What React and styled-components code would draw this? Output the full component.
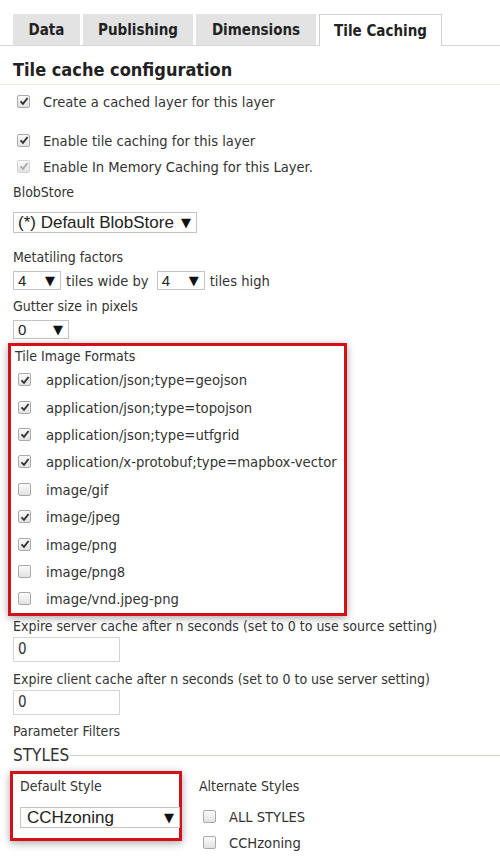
import React from "react"
import styled, { createGlobalStyle } from "styled-components"

const GlobalStyle = createGlobalStyle`
  body {
    margin: 0;
    background: #fff;
    font-family: "DejaVu Sans Condensed", "DejaVu Sans", sans-serif;
    color: #333;
    font-size: 14px;
  }
`;

const Page = styled.div`
  width: 500px;
  height: 860px;
  overflow: hidden;
  padding-left: 13px;
  box-sizing: border-box;
`;

const TabBar = styled.div`
  display: flex;
  gap: 3px;
  margin: 14px 0 0 -13px;
  padding-left: 13px;
  border-bottom: 1px solid #d6d6d6;
  height: 31px;
`;

const Tab = styled.div`
  width: ${p => p.w}px;
  box-sizing: border-box;
  display: flex;
  align-items: center;
  justify-content: center;
  font-weight: bold;
  font-size: 15px;
  color: #222;
  background: ${p => (p.active ? "#fff" : "#e3e3e3")};
  border: 1px solid ${p => (p.active ? "#cfcfcf" : "#e3e3e3")};
  border-bottom: none;
  height: ${p => (p.active ? "32px" : "31px")};
`;

const Heading = styled.h2`
  margin: 0 0 0 -13px;
  padding: 12px 0 2px 13px;
  font-size: 18px;
  line-height: 24px;
  font-weight: bold;
  color: #222;
  border-bottom: 1px solid #ebebdf;
`;

const Row = styled.div`
  display: flex;
  align-items: center;
  height: ${p => p.h || 20}px;
  margin-top: ${p => p.mt || 0}px;
  font-size: ${p => p.fs || 14}px;
`;

const Label = styled.div`
  height: 20px;
  line-height: 20px;
  margin-top: ${p => p.mt || 0}px;
  white-space: nowrap;
`;

const BoxWrap = styled.span`
  width: 13px;
  height: 13px;
  box-sizing: border-box;
  border: 1px solid ${p => (p.disabled ? "#d4d4d4" : "#a9a9a9")};
  border-radius: 2px;
  background: linear-gradient(#fbfbfb, #e2e2e2);
  display: inline-flex;
  align-items: center;
  justify-content: center;
  margin-left: ${p => p.ml}px;
  margin-right: ${p => p.mr}px;
  flex-shrink: 0;
`;

const Check = ({ checked, disabled, ml = 4, mr = 13 }) => (
  <BoxWrap disabled={disabled} ml={ml} mr={mr}>
    {checked && (
      <svg width="10" height="10" viewBox="0 0 10 10">
        <path
          d="M1.5 5.3 L4 7.8 L8.6 2"
          fill="none"
          stroke={disabled ? "#aaa" : "#333"}
          strokeWidth="1.9"
        />
      </svg>
    )}
  </BoxWrap>
);

const Select = styled.div`
  width: ${p => p.w}px;
  height: ${p => p.h || 19}px;
  margin-top: ${p => p.mt || 0}px;
  box-sizing: border-box;
  border: 1px solid #c4c4c4;
  background: #fff;
  display: flex;
  align-items: center;
  justify-content: space-between;
  padding: 0 5px 0 ${p => p.pl || 4}px;
  font-family: "Liberation Sans", Arial, sans-serif;
  font-size: ${p => p.fs || 15}px;
  color: #222;
  flex-shrink: 0;
`;

const Arrow = styled.span`
  font-family: "DejaVu Sans", sans-serif;
  font-size: 13px;
  color: #111;
`;

const RedBox = styled.div`
  border: 3px solid #d3111b;
  box-shadow: 0 2px 8px rgba(0, 0, 0, 0.35);
  box-sizing: border-box;
`;

const FormatsBox = styled(RedBox)`
  width: 339px;
  height: 273px;
  margin: 4px 0 0 -5px;
  padding-left: 4px;
`;

const FormatRow = styled.div`
  display: flex;
  align-items: center;
  height: 27.4px;
  font-size: 14.7px;
  white-space: nowrap;
`;

const TextInput = styled.div`
  width: 107px;
  height: 25px;
  margin-top: 1px;
  box-sizing: border-box;
  border: 1px solid #d4d4d4;
  padding-left: 4px;
  line-height: 23px;
  font-size: 15px;
`;

const Legend = styled.div`
  display: flex;
  align-items: center;
  height: 20px;
  margin-top: 4px;
  font-size: 17px;
  color: #333;
  &::after {
    content: "";
    flex: 1;
    border-top: 1px solid #d6d6bd;
    margin-left: 1px;
  }
`;

const StylesRow = styled.div`
  display: flex;
  margin-top: 6px;
`;

const DefaultBox = styled(RedBox)`
  width: 172px;
  height: 70px;
  margin-left: -3px;
  padding: 2px 0 0 7px;
`;

const AltColumn = styled.div`
  margin-left: 17px;
  padding-top: 5px;
`;

const AltList = styled.div`
  margin-top: 7px;
`;

const AltRow = styled.div`
  display: flex;
  align-items: center;
  height: 26px;
  font-size: 14.6px;
`;

const Inline = styled.span`
  margin: 0 ${p => p.mr || 0}px 0 ${p => p.ml || 0}px;
  font-size: 14.6px;
`;

const formats = [
  ["application/json;type=geojson", true],
  ["application/json;type=topojson", true],
  ["application/json;type=utfgrid", true],
  ["application/x-protobuf;type=mapbox-vector", true],
  ["image/gif", false],
  ["image/jpeg", true],
  ["image/png", true],
  ["image/png8", false],
  ["image/vnd.jpeg-png", false],
];

const App = () => (
  <Page>
    <GlobalStyle />
    <TabBar>
      <Tab w={67}>Data</Tab>
      <Tab w={110}>Publishing</Tab>
      <Tab w={120}>Dimensions</Tab>
      <Tab w={123} active>Tile Caching</Tab>
    </TabBar>
    <Heading>Tile cache configuration</Heading>

    <Row mt={6} fs={14.6}>
      <Check checked />
      Create a cached layer for this layer
    </Row>
    <Row mt={19} fs={14.6}>
      <Check checked />
      Enable tile caching for this layer
    </Row>
    <Row mt={6} fs={14.6}>
      <Check checked disabled />
      Enable In Memory Caching for this Layer.
    </Row>

    <Label mt={6}>BlobStore</Label>
    <Select w={184} h={21} mt={10} fs={17}>
      (*) Default BlobStore <Arrow>▼</Arrow>
    </Select>

    <Label mt={14}>Metatiling factors</Label>
    <Row mt={4} h={19}>
      <Select w={48}>4 <Arrow>▼</Arrow></Select>
      <Inline ml={5} mr={8}>tiles wide by</Inline>
      <Select w={48}>4 <Arrow>▼</Arrow></Select>
      <Inline ml={5}>tiles high</Inline>
    </Row>

    <Label mt={6}>Gutter size in pixels</Label>
    <Select w={56} mt={4}>0 <Arrow>▼</Arrow></Select>

    <FormatsBox>
      <Label>Tile Image Formats</Label>
      {formats.map(([name, on]) => (
        <FormatRow key={name}>
          <Check checked={on} ml={3} mr={15} />
          {name}
        </FormatRow>
      ))}
    </FormatsBox>

    <Label>Expire server cache after n seconds (set to 0 to use source setting)</Label>
    <TextInput>0</TextInput>
    <Label mt={7}>Expire client cache after n seconds (set to 0 to use server setting)</Label>
    <TextInput>0</TextInput>
    <Label mt={6}>Parameter Filters</Label>

    <Legend>STYLES</Legend>
    <StylesRow>
      <DefaultBox>
        <Label>Default Style</Label>
        <Select w={160} h={21} mt={11} fs={17} pl={6}>
          CCHzoning <Arrow>▼</Arrow>
        </Select>
      </DefaultBox>
      <AltColumn>
        <Label>Alternate Styles</Label>
        <AltList>
          <AltRow>
            <Check ml={4} mr={13} />
            ALL STYLES
          </AltRow>
          <AltRow>
            <Check ml={4} mr={13} />
            CCHzoning
          </AltRow>
        </AltList>
      </AltColumn>
    </StylesRow>
  </Page>
)

export default App
